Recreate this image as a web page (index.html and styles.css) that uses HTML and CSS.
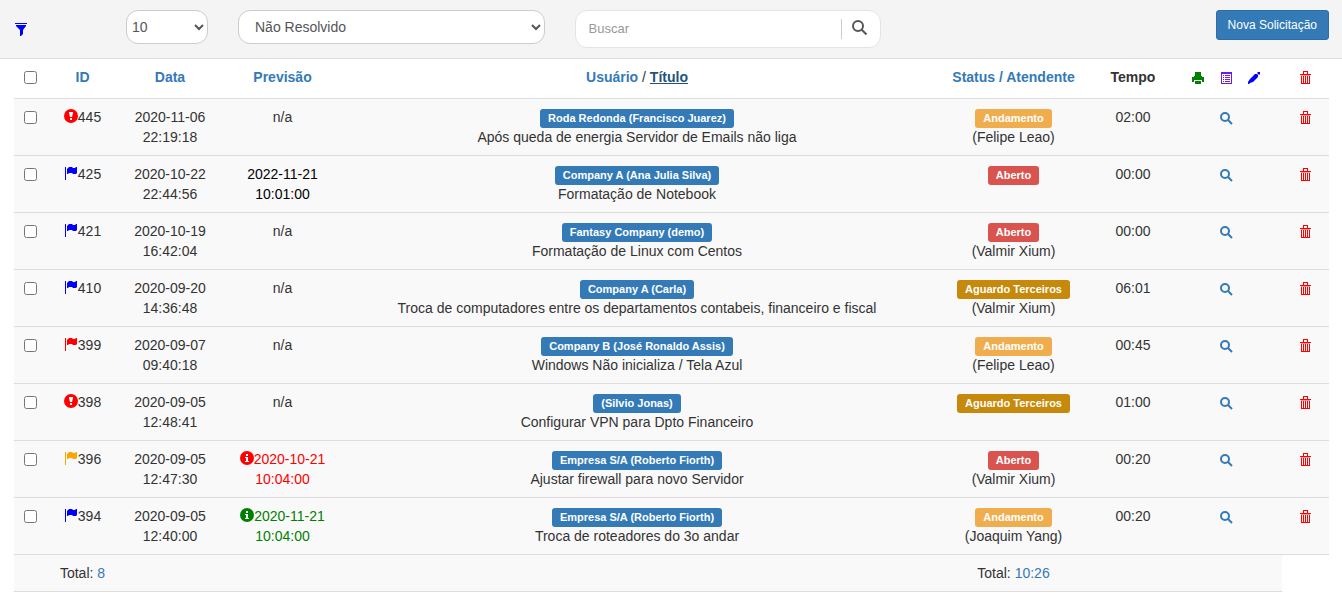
FILE: index.html
```
<!DOCTYPE html>
<html lang="pt-br">
  <head>
    <meta charset="UTF-8" />
    <title>Solicitações</title>
    <link rel="stylesheet" href="styles.css">
  </head>
  <body>
    <!-- icons -->
    <svg class="sprite">
      <symbol id="i-filter" viewBox="0 0 14 14"><path d="M1 0h12v1H1zM2 2h10v1l-3 4v4l-2 2H6V7L2 3z"/></symbol>
      <symbol id="i-alert" viewBox="0 0 14 14"><circle cx="7" cy="7" r="7"/><path fill="#fff" d="M5 3h4v1L8 8H6L5 4zM6 9h2v2H6z"/></symbol>
      <symbol id="i-info" viewBox="0 0 14 14"><circle cx="7" cy="7" r="7"/><path fill="#fff" d="M6 3h2v2H6zM5 6h3v4h1v1H5v-1h1V7H5z"/></symbol>
      <symbol id="i-flag" viewBox="0 0 14 14"><path d="M1 1h1v13H1zM3 3l2-2h3l1 1h2l1-1h1v6l-1 1H9L8 7H5L4 8H3z"/></symbol>
      <symbol id="i-search" viewBox="0 0 14 14"><g fill="none" stroke="currentColor" stroke-width="2"><circle cx="6" cy="6" r="4"/><path d="M9 9l4 4"/></g></symbol>
      <symbol id="i-find" viewBox="0 0 16 16"><g fill="none" stroke="currentColor" stroke-width="2"><circle cx="6" cy="6" r="5"/><path d="M9.500 9.500l5 5"/></g></symbol>
      <symbol id="i-trash" viewBox="0 0 14 14"><path fill-rule="evenodd" d="M4 0h5v3h3v1H1V3h3zM5 1v2h3V1zM2 5h9v8H2zM3 5v7h1V5zM5 5v7h1V5zM7 5v7h1V5zM9 5v7h1V5z"/><path d="M2 4h9v1H2z" opacity=".4"/></symbol>
      <symbol id="i-print" viewBox="0 0 14 14"><path d="M4 1h6v4h1v1h2v5h-2V9H3v2H1V6h2V5h1zM4 10h6v3H4z"/></symbol>
      <symbol id="i-list" viewBox="0 0 14 14"><path fill-rule="evenodd" d="M2 1h11v12H2zM3 3v9h9V3z"/><path d="M4 4h1v1H4zM6 4h5v1H6zM4 6h1v1H4zM6 6h5v1H6zM4 8h1v1H4zM6 8h5v1H6zM4 10h1v1H4zM6 10h5v1H6z"/></symbol>
      <symbol id="i-pencil" viewBox="0 0 14 14"><path d="M1 13v-2l2-3 5-5h2l1 1v2l-5 5-3 1-1 1zM10 2l1-1h2v2l-1 1z"/></symbol>
    </svg>

    <form class="toolbar">
      <a href="#" class="filter" aria-label="Filtro"><svg class="icon blue"><use href="#i-filter"/></svg></a>
      <select class="control" aria-label="Registros">
        <option>10</option>
        <option>50</option>
      </select>
      <select class="control status" aria-label="Status">
        <option>Não Resolvido</option>
        <option>Resolvido</option>
      </select>
      <div class="search">
        <input type="text" placeholder="Buscar" aria-label="Buscar">
        <button type="submit" aria-label="Pesquisar"><svg><use href="#i-find"/></svg></button>
      </div>
      <button type="button" class="btn-new">Nova Solicitação</button>
    </form>

    <div class="container">
      <table class="tickets">
        <colgroup>
          <col class="c-check"><col class="c-id"><col class="c-date"><col class="c-due"><col>
          <col class="c-status"><col class="c-time"><col class="c-view"><col class="c-del">
        </colgroup>
        <thead>
          <tr>
            <th><input type="checkbox" aria-label="Todos"></th>
            <th><a href="#">ID</a></th>
            <th><a href="#">Data</a></th>
            <th><a href="#">Previsão</a></th>
            <th><a href="#">Usuário</a> <span class="slash">/</span> <a href="#" class="active">Título</a></th>
            <th><a href="#">Status</a> <a href="#">/ Atendente</a></th>
            <th>Tempo</th>
            <th>
              <div class="tools">
                <a href="#" aria-label="Imprimir"><svg class="icon green"><use href="#i-print"/></svg></a>
                <a href="#" aria-label="Listar"><svg class="icon purple"><use href="#i-list"/></svg></a>
                <a href="#" aria-label="Editar"><svg class="icon blue"><use href="#i-pencil"/></svg></a>
              </div>
            </th>
            <th><a href="#" aria-label="Excluir"><svg class="icon red"><use href="#i-trash"/></svg></a></th>
          </tr>
        </thead>
        <tbody>
          <tr>
            <td><input type="checkbox" aria-label="445"></td>
            <td><svg class="icon mark red"><use href="#i-alert"/></svg>445</td>
            <td>2020-11-06<br>22:19:18</td>
            <td>n/a</td>
            <td><span class="label">Roda Redonda (Francisco Juarez)</span><br>Após queda de energia Servidor de Emails não liga</td>
            <td><span class="label progress">Andamento</span><br>(Felipe Leao)</td>
            <td>02:00</td>
            <td><a href="#" aria-label="Ver"><svg class="icon"><use href="#i-search"/></svg></a></td>
            <td><a href="#" aria-label="Excluir"><svg class="icon red"><use href="#i-trash"/></svg></a></td>
          </tr>
          <tr>
            <td><input type="checkbox" aria-label="425"></td>
            <td><svg class="icon mark blue"><use href="#i-flag"/></svg>425</td>
            <td>2020-10-22<br>22:44:56</td>
            <td class="black">2022-11-21<br>10:01:00</td>
            <td><span class="label">Company A (Ana Julia Silva)</span><br>Formatação de Notebook</td>
            <td><span class="label open">Aberto</span></td>
            <td>00:00</td>
            <td><a href="#" aria-label="Ver"><svg class="icon"><use href="#i-search"/></svg></a></td>
            <td><a href="#" aria-label="Excluir"><svg class="icon red"><use href="#i-trash"/></svg></a></td>
          </tr>
          <tr>
            <td><input type="checkbox" aria-label="421"></td>
            <td><svg class="icon mark blue"><use href="#i-flag"/></svg>421</td>
            <td>2020-10-19<br>16:42:04</td>
            <td>n/a</td>
            <td><span class="label">Fantasy Company (demo)</span><br>Formatação de Linux com Centos</td>
            <td><span class="label open">Aberto</span><br>(Valmir Xium)</td>
            <td>00:00</td>
            <td><a href="#" aria-label="Ver"><svg class="icon"><use href="#i-search"/></svg></a></td>
            <td><a href="#" aria-label="Excluir"><svg class="icon red"><use href="#i-trash"/></svg></a></td>
          </tr>
          <tr>
            <td><input type="checkbox" aria-label="410"></td>
            <td><svg class="icon mark blue"><use href="#i-flag"/></svg>410</td>
            <td>2020-09-20<br>14:36:48</td>
            <td>n/a</td>
            <td><span class="label">Company A (Carla)</span><br>Troca de computadores entre os departamentos contabeis, financeiro e fiscal</td>
            <td><span class="label waiting">Aguardo Terceiros</span><br>(Valmir Xium)</td>
            <td>06:01</td>
            <td><a href="#" aria-label="Ver"><svg class="icon"><use href="#i-search"/></svg></a></td>
            <td><a href="#" aria-label="Excluir"><svg class="icon red"><use href="#i-trash"/></svg></a></td>
          </tr>
          <tr>
            <td><input type="checkbox" aria-label="399"></td>
            <td><svg class="icon mark red"><use href="#i-flag"/></svg>399</td>
            <td>2020-09-07<br>09:40:18</td>
            <td>n/a</td>
            <td><span class="label">Company B (José Ronaldo Assis)</span><br>Windows Não inicializa / Tela Azul</td>
            <td><span class="label progress">Andamento</span><br>(Felipe Leao)</td>
            <td>00:45</td>
            <td><a href="#" aria-label="Ver"><svg class="icon"><use href="#i-search"/></svg></a></td>
            <td><a href="#" aria-label="Excluir"><svg class="icon red"><use href="#i-trash"/></svg></a></td>
          </tr>
          <tr>
            <td><input type="checkbox" aria-label="398"></td>
            <td><svg class="icon mark red"><use href="#i-alert"/></svg>398</td>
            <td>2020-09-05<br>12:48:41</td>
            <td>n/a</td>
            <td><span class="label">(Silvio Jonas)</span><br>Configurar VPN para Dpto Financeiro</td>
            <td><span class="label waiting">Aguardo Terceiros</span></td>
            <td>01:00</td>
            <td><a href="#" aria-label="Ver"><svg class="icon"><use href="#i-search"/></svg></a></td>
            <td><a href="#" aria-label="Excluir"><svg class="icon red"><use href="#i-trash"/></svg></a></td>
          </tr>
          <tr>
            <td><input type="checkbox" aria-label="396"></td>
            <td><svg class="icon mark orange"><use href="#i-flag"/></svg>396</td>
            <td>2020-09-05<br>12:47:30</td>
            <td class="red"><svg class="icon mark"><use href="#i-info"/></svg>2020-10-21<br>10:04:00</td>
            <td><span class="label">Empresa S/A (Roberto Fiorth)</span><br>Ajustar firewall para novo Servidor</td>
            <td><span class="label open">Aberto</span><br>(Valmir Xium)</td>
            <td>00:20</td>
            <td><a href="#" aria-label="Ver"><svg class="icon"><use href="#i-search"/></svg></a></td>
            <td><a href="#" aria-label="Excluir"><svg class="icon red"><use href="#i-trash"/></svg></a></td>
          </tr>
          <tr>
            <td><input type="checkbox" aria-label="394"></td>
            <td><svg class="icon mark blue"><use href="#i-flag"/></svg>394</td>
            <td>2020-09-05<br>12:40:00</td>
            <td class="green"><svg class="icon mark"><use href="#i-info"/></svg>2020-11-21<br>10:04:00</td>
            <td><span class="label">Empresa S/A (Roberto Fiorth)</span><br>Troca de roteadores do 3o andar</td>
            <td><span class="label progress">Andamento</span><br>(Joaquim Yang)</td>
            <td>00:20</td>
            <td><a href="#" aria-label="Ver"><svg class="icon"><use href="#i-search"/></svg></a></td>
            <td><a href="#" aria-label="Excluir"><svg class="icon red"><use href="#i-trash"/></svg></a></td>
          </tr>
        </tbody>
        <tfoot>
          <tr>
            <td></td>
            <td>Total: <a href="#">8</a></td>
            <td colspan="3"></td>
            <td>Total: <a href="#">10:26</a></td>
            <td colspan="2"></td>
          </tr>
        </tfoot>
      </table>
    </div>
  </body>
</html>
```

FILE: styles.css
```
* {
  box-sizing: border-box;
}
body {
  margin: 0;
  font-family: "Liberation Sans", Arial, sans-serif;
  font-size: 14px;
  line-height: 20px;
  color: #333;
  background-color: #fff;
}
a {
  color: #337ab7;
  text-decoration: none;
}
.sprite {
  display: none;
}
.icon {
  width: 14px;
  height: 14px;
  fill: currentColor;
  vertical-align: -3px;
}
.mark {
  vertical-align: -1px;
}

/* colors */
.red { color: #f00; }
.blue { color: #00f; }
.green { color: #008000; }
.orange { color: #ffa500; }
.purple { color: #6a1be8; }
.black { color: #000; }

/* top bar */
.toolbar {
  display: grid;
  grid-template-columns: 82px 82px 11fr 11fr 15fr;
  gap: 30px;
  align-items: start;
  padding: 10px 13px 10px 14px;
  background-color: #f4f4f4;
  border-bottom: 1px solid #ddd;
}
.filter {
  padding-top: 9px;
}
.control {
  width: 100%;
  height: 34px;
  padding: 6px 0 6px 1px;
  font: inherit;
  color: #555;
  background-color: #fff;
  border: 1px solid #ccc;
  border-radius: 12px;
}
.control.status {
  padding-left: 12px;
}
.search {
  display: flex;
  align-items: center;
  height: 38px;
  padding: 0 12px 0 13px;
  background-color: #fff;
  border: 1px solid #e4e4e4;
  border-radius: 12px;
}
.search input {
  flex: 1;
  min-width: 0;
  padding: 0;
  font: inherit;
  font-size: 13px;
  border: 0;
  outline: 0;
}
.search input::placeholder {
  color: #999;
}
.search button {
  height: 20px;
  padding: 0 0 3px 10px;
  color: #555;
  background: none;
  border: 0;
  border-left: 1px solid #ccc;
}
.search svg {
  display: block;
  width: 16px;
  height: 16px;
}
.btn-new {
  justify-self: end;
  height: 30px;
  padding: 0 11px;
  font: inherit;
  font-size: 12px;
  color: #fff;
  background-color: #337ab7;
  border: 1px solid #2e6da4;
  border-radius: 3px;
}

/* tickets */
.container {
  padding: 0 13px 0 14px;
}
.tickets {
  width: 100%;
  table-layout: fixed;
  border-spacing: 0;
  text-align: center;
}
.c-check { width: 33px; }
.c-id { width: 71px; }
.c-date { width: 104px; }
.c-due { width: 121px; }
.c-status { width: 165px; }
.c-time { width: 74px; }
.c-view { width: 112px; }
.c-del { width: 47px; }
.tickets th,
.tickets td {
  padding: 8px 0;
  vertical-align: top;
  border-bottom: 1px solid #ddd;
}
.tickets th {
  padding-bottom: 11px;
}
.tickets td {
  background-color: #f9f9f9;
}
.tickets input {
  display: block;
  width: 13px;
  height: 13px;
  margin: 4px auto 0;
}
.slash {
  font-weight: normal;
}
.active {
  color: #23527c;
  text-decoration: underline;
}
.tools {
  display: flex;
  justify-content: center;
  gap: 14px;
}
.label {
  display: inline-block;
  height: 19px;
  margin: 2px 0 -1px;
  padding: 0 8px;
  font-size: 11px;
  font-weight: bold;
  line-height: 19px;
  vertical-align: top;
  color: #fff;
  background-color: #337ab7;
  border-radius: 3px;
}
.progress { background-color: #f0ad4e; }
.open { background-color: #d9534f; }
.waiting { background-color: #c6890b; }
```
